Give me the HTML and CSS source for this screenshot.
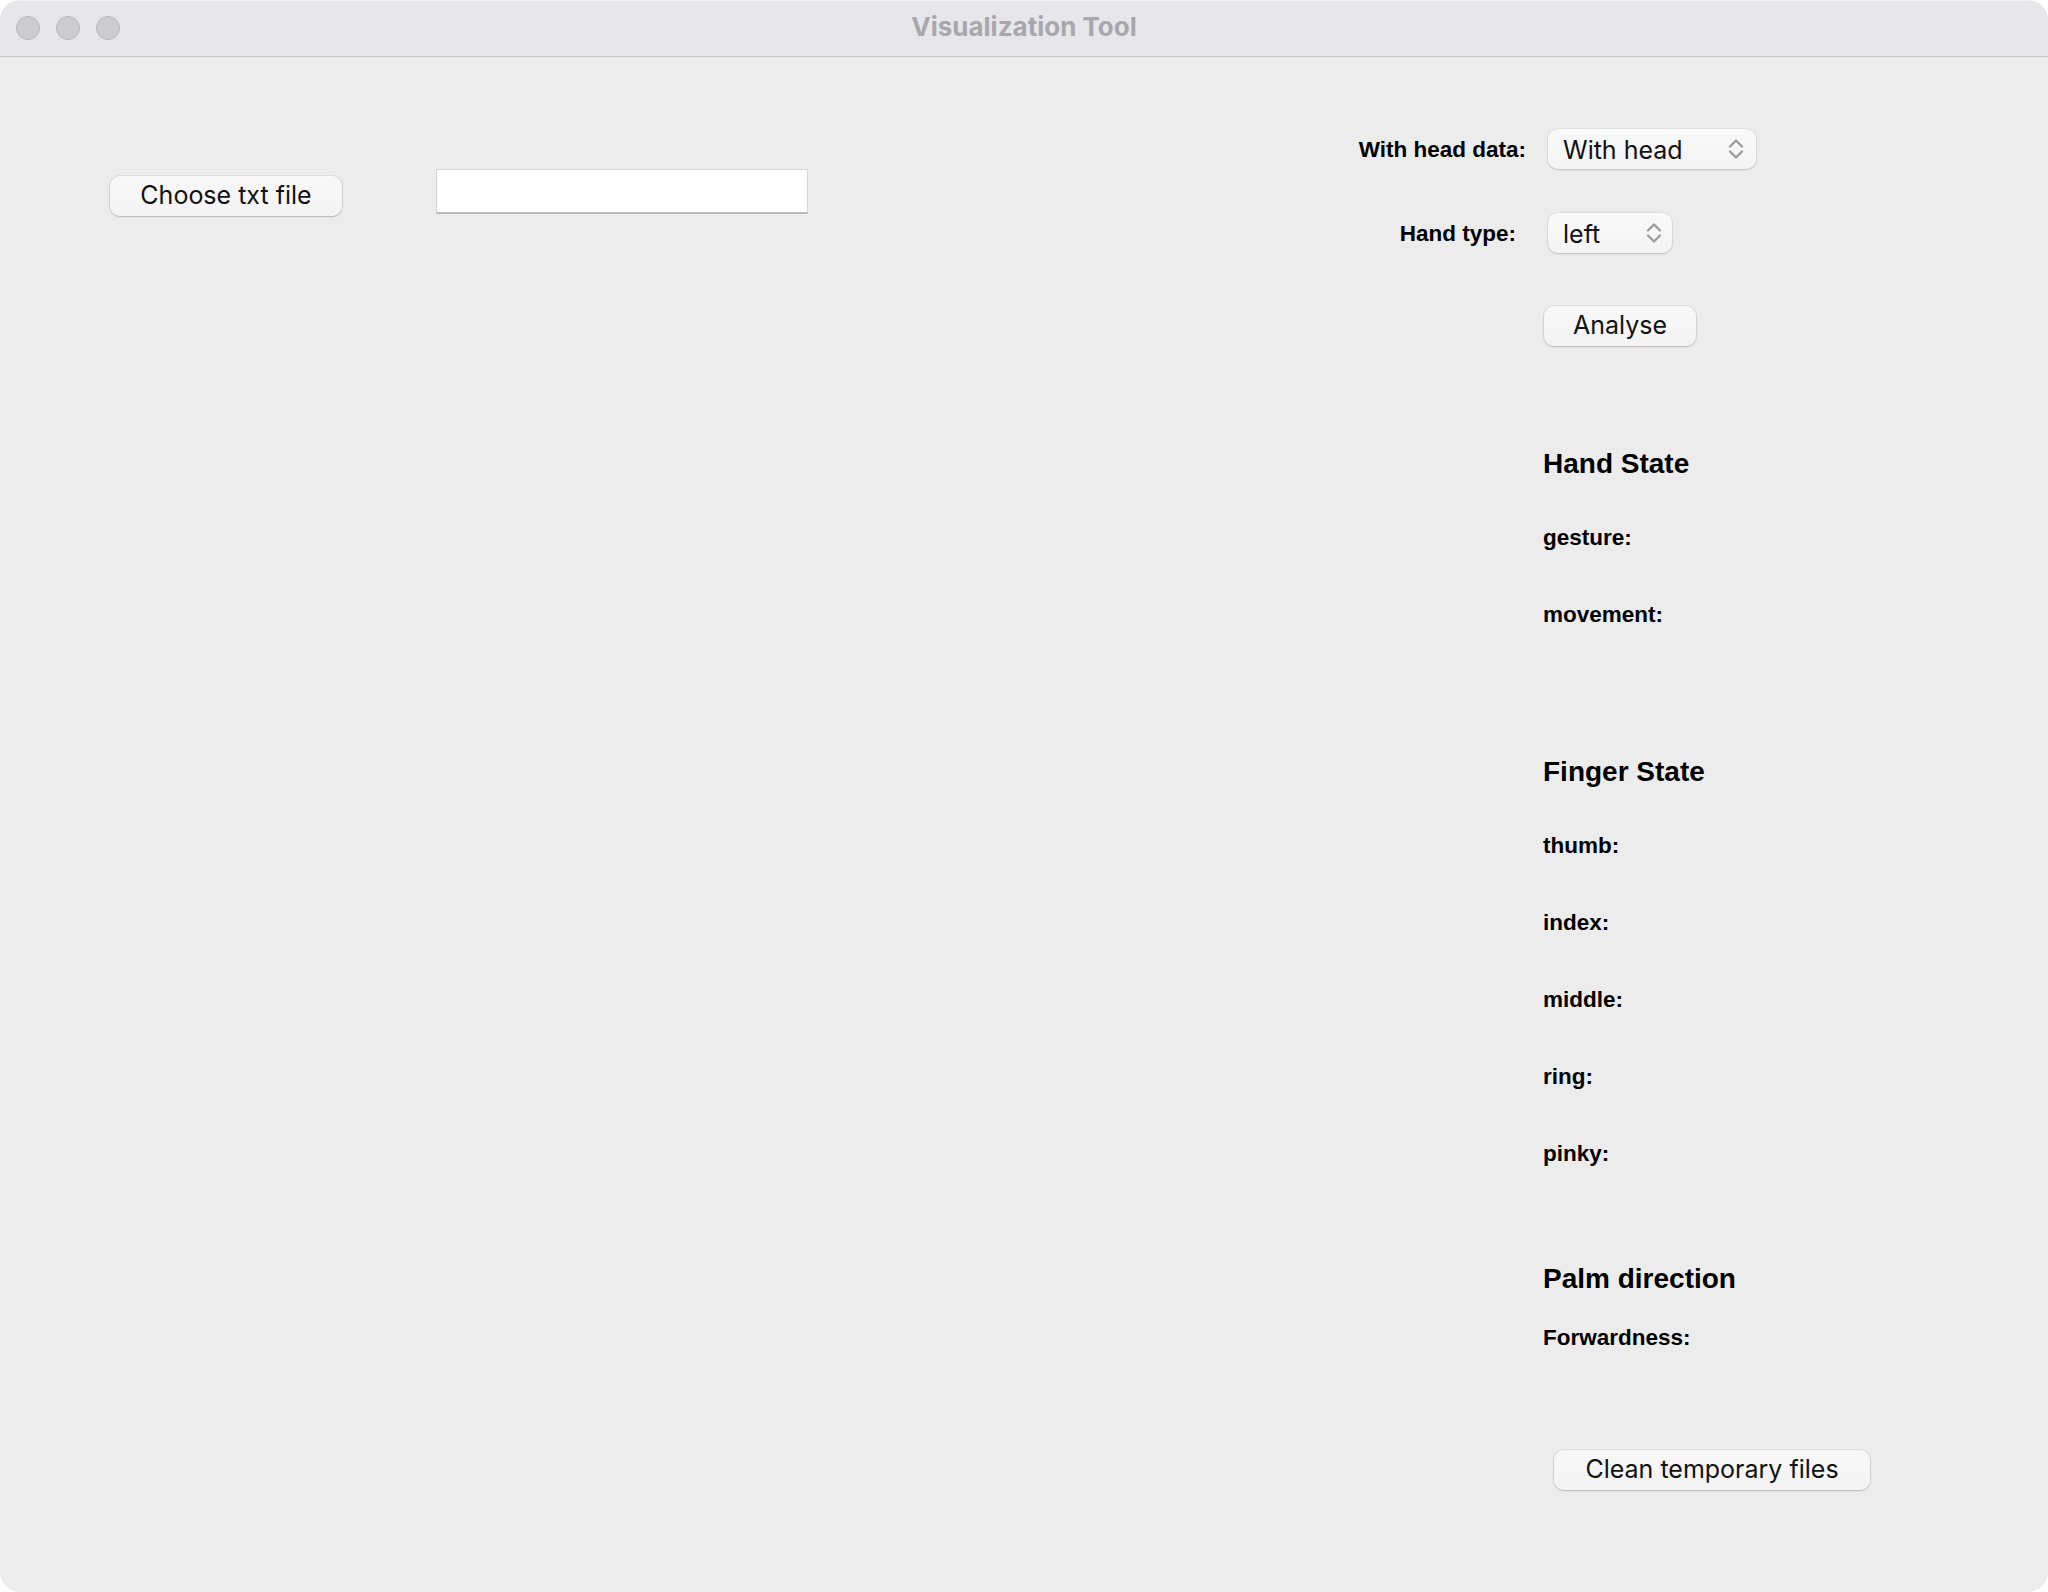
FILE: index.html
```html
<!DOCTYPE html>
<html lang="en">
<head>
<meta charset="utf-8">
<title>Visualization Tool</title>
<link rel="stylesheet" href="styles.css">
</head>
<body>
<div class="window">
  <header class="titlebar">
    <div class="lights">
      <span class="light"></span>
      <span class="light"></span>
      <span class="light"></span>
    </div>
    <div class="title">Visualization Tool</div>
  </header>
  <main class="content">
    <section class="left">
      <button class="btn btn-choose">Choose txt file</button>
      <div class="entry"></div>
    </section>
    <section class="side">
      <div class="form">
        <label class="form-label">With head data:</label>
        <div class="select select-head">
          <span class="select-text">With head</span>
          <svg class="chev" width="16" height="22" viewBox="0 0 16 22"><path d="M2 8.5 L8 2.5 L14 8.5 M2 13.5 L8 19.5 L14 13.5" fill="none" stroke="#9c9c9c" stroke-width="2.4" stroke-linecap="round" stroke-linejoin="round"/></svg>
        </div>
        <label class="form-label form-label-hand">Hand type:</label>
        <div class="select select-hand">
          <span class="select-text">left</span>
          <svg class="chev" width="16" height="22" viewBox="0 0 16 22"><path d="M2 8.5 L8 2.5 L14 8.5 M2 13.5 L8 19.5 L14 13.5" fill="none" stroke="#9c9c9c" stroke-width="2.4" stroke-linecap="round" stroke-linejoin="round"/></svg>
        </div>
      </div>
      <div class="results">
        <button class="btn btn-analyse">Analyse</button>
        <h2 class="heading heading-hand">Hand State</h2>
        <div class="field field-first">gesture:</div>
        <div class="field">movement:</div>
        <h2 class="heading heading-finger">Finger State</h2>
        <div class="field field-first">thumb:</div>
        <div class="field">index:</div>
        <div class="field">middle:</div>
        <div class="field">ring:</div>
        <div class="field">pinky:</div>
        <h2 class="heading heading-palm">Palm direction</h2>
        <div class="field field-palm">Forwardness:</div>
        <button class="btn btn-clean">Clean temporary files</button>
      </div>
    </section>
  </main>
</div>
</body>
</html>
```

FILE: styles.css
```css
* { box-sizing: border-box; }

html, body {
  margin: 0;
  padding: 0;
  background: #ffffff;
}

.window {
  width: 2048px;
  height: 1592px;
  background: #ececec;
  border-radius: 20px;
  overflow: hidden;
  display: flex;
  flex-direction: column;
}

.titlebar {
  height: 57px;
  flex: 0 0 57px;
  background: #e7e6ea;
  border-bottom: 1px solid #c7c6c9;
  border-top: 1px solid #f3f3f5;
  position: relative;
  display: flex;
  align-items: flex-start;
}

.lights {
  display: flex;
  gap: 16px;
  padding: 15px 0 0 16px;
}

.light {
  width: 24px;
  height: 24px;
  border-radius: 50%;
  background: #cecccf;
  border: 1px solid #b6b4b8;
}

.title {
  position: absolute;
  left: 0;
  right: 0;
  top: 9px;
  text-align: center;
  font-family: Inter, "Liberation Sans", sans-serif;
  font-weight: 700;
  font-size: 26px;
  line-height: 34px;
  color: #a9a7ad;
}

.content {
  flex: 1;
  display: flex;
}

.left {
  flex: 1;
  display: flex;
  align-items: flex-start;
  padding: 112px 0 0 110px;
  gap: 94px;
}

.btn {
  font-family: Inter, "Liberation Sans", sans-serif;
  font-size: 25px;
  color: #111111;
  height: 40px;
  padding: 0 0 2px 0;
  border: none;
  border-radius: 10px;
  background: linear-gradient(#f8f8f8, #f3f3f3);
  box-shadow: 0 0 0 1px rgba(0, 0, 0, 0.06), 0 1px 2px rgba(0, 0, 0, 0.18);
  line-height: 38px;
  text-align: center;
}

.btn-choose {
  width: 232px;
  margin-top: 7px;
}

.entry {
  width: 372px;
  height: 45px;
  background: #ffffff;
  border: 1px solid #d5d5d5;
  border-bottom: 2px solid #bababa;
}

.side {
  width: 708px;
  flex: 0 0 708px;
  padding-top: 72px;
}

.form {
  display: grid;
  grid-template-columns: 186px auto;
  column-gap: 22px;
  row-gap: 44px;
  align-items: center;
  justify-items: start;
}

.form-label {
  justify-self: end;
  font-family: "Liberation Sans", Arial, sans-serif;
  font-weight: 700;
  font-size: 22.5px;
  line-height: 26px;
  padding-top: 1px;
  color: #000000;
}

.form-label-hand {
  padding-right: 10px;
}

.select {
  height: 40px;
  border-radius: 10px;
  background: linear-gradient(#f9f9f9, #f4f4f4);
  box-shadow: 0 0 0 1px rgba(0, 0, 0, 0.05), 0 1px 2px rgba(0, 0, 0, 0.16);
  display: flex;
  align-items: center;
  justify-content: space-between;
  padding-left: 15px;
  font-family: Inter, "Liberation Sans", sans-serif;
  font-size: 25px;
  color: #111111;
}

.select-head {
  width: 208px;
  padding-right: 12px;
}

.select-hand {
  width: 124px;
  padding-right: 10px;
}

.select-text {
  line-height: 40px;
  padding-top: 2px;
}

.chev {
  display: block;
}

.results {
  display: flex;
  flex-direction: column;
  align-items: flex-start;
  padding-left: 203px;
  margin-top: 53px;
}

.btn-analyse {
  width: 152px;
  margin-left: 1px;
}

.heading {
  margin: 0;
  font-family: "Liberation Sans", Arial, sans-serif;
  font-weight: 700;
  font-size: 28px;
  line-height: 32px;
  color: #000000;
}

.heading-hand { margin-top: 102px; }
.heading-finger { margin-top: 128px; }
.heading-palm { margin-top: 96px; }

.field {
  font-family: "Liberation Sans", Arial, sans-serif;
  font-weight: 700;
  font-size: 22.5px;
  line-height: 26px;
  color: #000000;
  margin-top: 51px;
}

.field-first { margin-top: 45px; }
.field-palm { margin-top: 30px; }

.btn-clean {
  width: 316px;
  margin-top: 99px;
  margin-left: 11px;
}
```
